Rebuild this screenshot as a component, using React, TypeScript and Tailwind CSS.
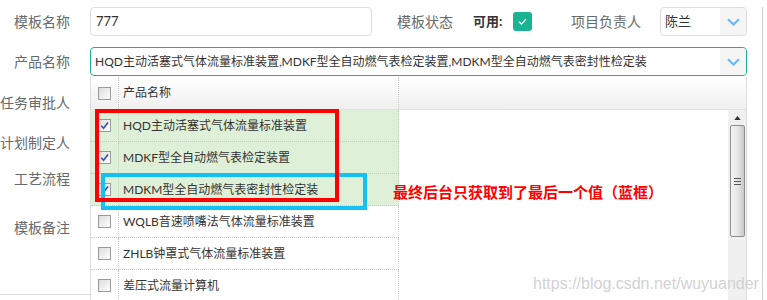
import React from 'react';

const rows = [
  { name: 'HQD主动活塞式气体流量标准装置', checked: true },
  { name: 'MDKF型全自动燃气表检定装置', checked: true },
  { name: 'MDKM型全自动燃气表密封性检定装', checked: true },
  { name: 'WQLB音速喷嘴法气体流量标准装置', checked: false },
  { name: 'ZHLB钟罩式气体流量标准装置', checked: false },
  { name: '差压式流量计算机', checked: false },
];

function Box({ checked }: { checked: boolean }) {
  return (
    <span className="flex h-[13px] w-[13px] items-center justify-center border border-[#9a9a9a] bg-linear-to-br from-[#dcdcdc] to-white">
      {checked && (
        <svg viewBox="0 0 12 12" className="h-[11px] w-[11px]">
          <path d="M2.5 6.2 L5 9 L9.8 2.6" fill="none" stroke="#3a4fb0" strokeWidth="1.8" />
        </svg>
      )}
    </span>
  );
}

function Chevron() {
  return (
    <div className="flex h-full w-[26px] items-center justify-center rounded-r-[4px] bg-[#f5f5f5]">
      <svg viewBox="0 0 13 8" className="h-[8px] w-[13px]">
        <path d="M1 1.3 L6.5 6.5 L12 1.3" fill="none" stroke="#6db6ee" strokeWidth="2" />
      </svg>
    </div>
  );
}

export default function App() {
  return (
    <div className="relative h-[300px] w-[767px] overflow-hidden bg-white font-[Lato,'Noto_Sans_CJK_SC',sans-serif] text-[12px] text-[#333]">
      {/* top form row */}
      <div className="mt-[7px] flex h-[29px] items-center">
        <div className="w-[70px] text-right text-[14px] text-[#676a6c]">模板名称</div>
        <div className="ml-[20px] flex h-full w-[282px] items-center rounded-[4px] border border-[#dedede] pl-[5px] text-[13px]">777</div>
        <div className="ml-[25px] w-[56px] text-[14px] whitespace-nowrap text-[#676a6c]">模板状态</div>
        <div className="ml-[20px] w-[27px] text-[13px] font-bold whitespace-nowrap text-[#333]">可用:</div>
        <span className="ml-[13px] flex h-[19px] w-[19px] items-center justify-center rounded-[3px] bg-[#1ab394]">
          <svg viewBox="0 0 12 12" className="h-[11px] w-[11px]">
            <path d="M2.2 6.2 L4.9 8.8 L9.8 3.4" fill="none" stroke="white" strokeWidth="1.4" />
          </svg>
        </span>
        <div className="ml-[39px] w-[70px] text-[14px] whitespace-nowrap text-[#676a6c]">项目负责人</div>
        <div className="ml-[19px] flex h-full w-[87px] items-center rounded-[4px] border border-[#dedede]">
          <span className="flex-1 pl-[4px] text-[13px]">陈兰</span>
          <Chevron />
        </div>
        <div className="ml-[15px] h-[300px] self-start border-l border-[#d0d0d0]" />
      </div>

      {/* product row */}
      <div className="mt-[11px] flex h-[29px] items-center">
        <div className="w-[70px] text-right text-[14px] text-[#676a6c]">产品名称</div>
        <div className="ml-[20px] flex h-full w-[657px] items-center rounded-[4px] border border-[#1ab394]">
          <span className="flex-1 pl-[4px] text-[12px] whitespace-nowrap">
            HQD主动活塞式气体流量标准装置,MDKF型全自动燃气表检定装置,MDKM型全自动燃气表密封性检定装
          </span>
          <Chevron />
        </div>
      </div>

      {/* remaining labels */}
      <div className="flex w-[70px] flex-col text-right text-[14px] text-[#676a6c]">
        <div className="mt-[17px] h-[20px] leading-[20px] whitespace-nowrap">任务审批人</div>
        <div className="mt-[20px] h-[20px] leading-[20px] whitespace-nowrap">计划制定人</div>
        <div className="mt-[16px] h-[20px] leading-[20px]">工艺流程</div>
        <div className="mt-[29px] h-[20px] leading-[20px]">模板备注</div>
      </div>
      <div className="mt-[56px] w-[90px] border-t border-[#ddd]" />

      {/* dropdown grid */}
      <div className="absolute left-[90px] top-[77px] flex h-[240px] w-[657px] flex-col border border-t-0 border-[#ddd] bg-white">
        <div className="flex h-[33px] border-b border-[#e2e2e2] bg-linear-to-b from-white to-[#efefef]">
          <div className="flex w-[28px] items-center justify-center border-r border-dotted border-[#c8c8c8]">
            <Box checked={false} />
          </div>
          <div className="flex w-[280px] items-center border-r border-dotted border-[#c8c8c8] pl-[4px]">产品名称</div>
        </div>
        <div className="flex flex-1">
          <div className="flex w-[637px] flex-col">
            {rows.map((r) => (
              <div key={r.name} className="flex h-[32px] shrink-0">
                <div className={`flex w-[28px] items-center justify-center border-r border-b border-dotted border-[#c8c8c8] ${r.checked ? 'bg-[#dff0d8]' : ''}`}>
                  <Box checked={r.checked} />
                </div>
                <div className={`flex w-[280px] items-center border-r border-b border-dotted border-[#c8c8c8] pl-[4px] whitespace-nowrap ${r.checked ? 'bg-[#dff0d8]' : ''}`}>
                  {r.name}
                </div>
              </div>
            ))}
          </div>
          {/* scrollbar */}
          <div className="flex w-[18px] flex-col items-center bg-[#f0f0f0] pt-[6px]">
            <svg viewBox="0 0 8 5" className="h-[4px] w-[7px]">
              <path d="M0 5 L4 0 L8 5 Z" fill="#333" />
            </svg>
            <div className="mt-[5px] flex h-[112px] w-[15px] flex-col items-center justify-center gap-[2px] rounded-[2px] border border-[#8e8e8e] bg-linear-to-r from-[#f4f4f4] via-[#e6e6e6] to-[#c9c9c9]">
              <span className="h-px w-[7px] bg-[#555]" />
              <span className="h-px w-[7px] bg-[#555]" />
              <span className="h-px w-[7px] bg-[#555]" />
            </div>
          </div>
        </div>
      </div>

      {/* annotations */}
      <div className="absolute left-[101px] top-[173px] h-[37px] w-[266px] border-4 border-[#12c2f7]" />
      <div className="absolute left-[95px] top-[109px] h-[93px] w-[244px] border-4 border-[#ff0000]" />
      <div className="absolute left-[393px] top-[181px] text-[15px] leading-[22px] font-bold whitespace-nowrap text-[#ff0000] font-['Noto_Sans_CJK_SC',sans-serif]">
        最终后台只获取到了最后一个值（蓝框）
      </div>
      <div className="absolute left-[533px] top-[272px] text-[16px] whitespace-nowrap text-[#d2d2d2] font-['Liberation_Sans',sans-serif]">
        https://blog.csdn.net/wuyuander
      </div>
    </div>
  );
}
